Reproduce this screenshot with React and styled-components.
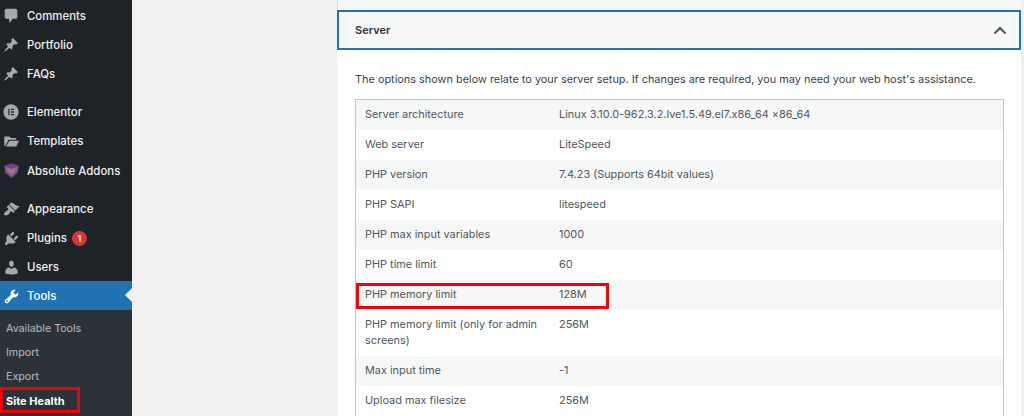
import React from "react";
import styled, { createGlobalStyle } from "styled-components";

const Global = createGlobalStyle`
  html, body { margin: 0; padding: 0; background: #f0f0f1; }
  body { font-family: Inter, "Liberation Sans", sans-serif; }
`;

const Page = styled.div`
  display: flex;
  width: 1024px;
  height: 416px;
  overflow: hidden;
  background: #f0f0f1;
`;

const Sidebar = styled.nav`
  width: 132px;
  flex: none;
  background: #1d2327;
  display: flex;
  flex-direction: column;
`;

const Group = styled.div`
  display: flex;
  flex-direction: column;
  margin-bottom: ${(p) => p.$gap || 0}px;
`;

const MenuItem = styled.div`
  position: relative;
  height: 29.1px;
  box-sizing: border-box;
  padding-top: 2px;
  display: flex;
  align-items: center;
  flex: none;
  color: ${(p) => (p.$active ? "#fff" : "#f0f0f1")};
  background: ${(p) => (p.$active ? "#2271b1" : "transparent")};
  font-size: 11.4px;
  font-weight: 500;
`;

const IconBox = styled.span`
  width: 27px;
  flex: none;
  display: flex;
  justify-content: center;
  padding-right: 5px;
  box-sizing: border-box;
`;

const Badge = styled.span`
  width: 15px;
  height: 15px;
  border-radius: 50%;
  background: #d63638;
  color: #fff;
  font-size: 9px;
  font-weight: 600;
  display: flex;
  align-items: center;
  justify-content: center;
  margin-left: 5px;
`;

const Arrow = styled.span`
  position: absolute;
  right: 0;
  top: 50%;
  margin-top: -7px;
  border: 7px solid transparent;
  border-right-color: #f0f0f1;
  border-left-width: 0;
`;

const Submenu = styled.div`
  flex: 1;
  background: #2c3338;
  padding-top: 7px;
  display: flex;
  flex-direction: column;
`;

const SubItem = styled.div`
  position: relative;
  height: 24px;
  display: flex;
  align-items: center;
  padding-left: 6px;
  font-size: ${(p) => (p.$current ? 11 : 10.7)}px;
  font-weight: ${(p) => (p.$current ? 700 : 400)};
  color: ${(p) => (p.$current ? "#fff" : "rgba(240,246,252,.7)")};
`;

const Mark = styled.span`
  position: absolute;
  box-sizing: border-box;
  border: 3px solid #f40009;
  pointer-events: none;
  left: ${(p) => p.$l}px;
  top: ${(p) => p.$t}px;
  width: ${(p) => p.$w}px;
  height: ${(p) => p.$h}px;
`;

const Content = styled.main`
  flex: 1;
  padding: 0 3px 0 205px;
  min-width: 0;
`;

const Panel = styled.section`
  background: #fff;
  height: 416px;
  box-sizing: border-box;
`;

const PrevItem = styled.div`
  height: 10px;
  background: #f6f7f7;
  border-left: 1px solid #dcdcde;
`;

const Heading = styled.div`
  height: 40px;
  box-sizing: border-box;
  border: 2px solid #2271b1;
  background: #f6f7f7;
  display: flex;
  align-items: center;
  justify-content: space-between;
  padding: 0 12px 0 16px;
  color: #2c3338;
  font-size: 11px;
  font-weight: 600;
`;

const Body = styled.div`
  padding: 0 17px 0 18px;
`;

const Intro = styled.p`
  margin: 0;
  padding-top: 21px;
  height: 49px;
  box-sizing: border-box;
  font-size: 10.9px;
  line-height: 16px;
  color: #3c434a;
  white-space: nowrap;
`;

const Table = styled.div`
  border: 1px solid #c3c4c7;
  border-bottom: none;
`;

const Row = styled.div`
  position: relative;
  display: grid;
  grid-template-columns: 194px 1fr;
  padding: 5.5px 9px 8.5px;
  background: ${(p) => (p.$odd ? "#f6f7f7" : "#fff")};
  font-size: 10.9px;
  line-height: 16px;
  color: #50575e;
  & > span:first-child { padding-right: 8px; }
`;

const ChevronIcon = () => (
  <svg width="14" height="9" viewBox="0 0 14 9" fill="none">
    <path d="M1.5 7.5 L7 2 L12.5 7.5" stroke="#50575e" strokeWidth="2" />
  </svg>
);

const Dash = ({ d, size = 18, fill = "#a7aaad" }) => (
  <svg width={size} height={size} viewBox="0 0 20 20" fill={fill}>
    <path fillRule="evenodd" d={d} />
  </svg>
);

const pinPath =
  "M10.44 3.02l1.82-1.82 6.36 6.35-1.83 1.82c-1.05-.68-2.48-.57-3.41.36l-.75.75c-.92.93-1.04 2.35-.35 3.41l-1.83 1.82-2.41-2.41-2.8 2.79c-.42.42-3.38 2.71-3.8 2.29s1.86-3.39 2.28-3.81l2.79-2.79L4.1 9.36l1.83-1.82c1.05.69 2.48.57 3.4-.36l.75-.75c.93-.92 1.05-2.35.36-3.41z";

const icons = {
  comments: <Dash d="M5 2h10c1.1 0 2 .9 2 2v7c0 1.1-.9 2-2 2h-3l-4 5v-5H5c-1.100 0-2-.9-2-2V4c0-1.100.9-2 2-2z" />,
  pin: <Dash size={16} d={pinPath} />,
  elementor: <Dash d="M10 1.500a8.500 8.500 0 1 1 0 17 8.500 8.500 0 0 1 0-17zM7 6.500v7h1.400v-7zm3 0v1.400h3.400V6.500zm0 2.800v1.400h3.400V9.300zm0 2.800v1.400h3.400v-1.400z" />,
  folder: <Dash size={17} d="M1.500 4h6l2 2h6v2H6.500L3 15H1.500zM7.500 9h11.500l-3.500 7H3.500z" />,
  cube: (
    <svg width="17" height="17" viewBox="0 0 20 20">
      <path d="M1.500 4.500L10 1.500l8.500 3-1 8L10 19l-7.500-6.500z" fill="#6f4283" />
      <path d="M2 5l8 3 8-3-2 7-6 5-6-5z" fill="#8a5a9e" />
      <path d="M5 7l5 2 5-2-1.500 4.500L10 14l-3.500-2.500z" fill="#b0727f" />
    </svg>
  ),
  brush: <Dash size={17} d="M14.480 11.060L7.410 3.990l1.500-1.500c.5-.56 2.300-.47 3.510.32 1.210.8 1.430 1.280 2.910 2.100 1.180.64 2.450 1.260 4.450.85zm-.71.71L6.700 4.700 4.930 6.470c-.39.39-.39 1.020 0 1.410l1.060 1.060c.39.39.39 1.030 0 1.420-.6.6-1.430 1.110-2.210 1.690-.35.26-.7.53-1.010.84C1.430 13.230.78 15.700 1.700 16.600c.91.9 3.500.4 4.830-.93.32-.31.58-.66.84-1.010.58-.79 1.090-1.600 1.690-2.200.39-.39 1.020-.39 1.410 0l1.060 1.060c.39.39 1.020.39 1.410 0z" />,
  plug: <Dash size={17} d="M13.110 4.360L9.870 7.600 8 5.730l3.240-3.240c.35-.34 1.050-.2 1.560.32.52.51.66 1.210.31 1.550zm-8 1.770l.91-1.120 9.010 9.010-1.190.84c-.71.71-2.630 1.160-3.820 1.160H6.140L4.900 17.260c-.59.59-1.540.59-2.120 0-.59-.58-.59-1.530 0-2.120l1.240-1.240v-3.880c0-1.130.4-3.190 1.090-3.890zm7.260 3.970l3.240-3.240c.34-.35 1.040-.21 1.550.31.52.51.66 1.210.31 1.550l-3.240 3.250z" />,
  user: <Dash size={17} d="M10 9.250c-2.270 0-2.730-3.440-2.730-3.440C7 4.020 7.820 2 9.970 2c2.160 0 2.980 2.020 2.710 3.810 0 0-.41 3.440-2.680 3.440zm0 2.570L12.720 10c2.390 0 4.520 2.330 4.520 4.530v2.490s-3.650 1.130-7.240 1.130c-3.650 0-7.240-1.130-7.240-1.130v-2.490c0-2.250 1.940-4.480 4.470-4.480z" />,
  wrench: <Dash size={17} fill="#fff" d="M16.680 9.770c-1.340 1.340-3.300 1.670-4.950.99l-5.410 6.520c-.99.99-2.590.99-3.580 0s-.99-2.590 0-3.570l6.520-5.420c-.68-1.650-.35-3.610.99-4.950 1.280-1.280 3.120-1.620 4.720-1.060l-2.890 2.890 2.820 2.820 2.860-2.870c.53 1.580.18 3.390-1.080 4.650zM3.810 16.210c.4.39 1.040.39 1.430 0 .4-.4.4-1.040 0-1.430-.39-.4-1.030-.4-1.430 0-.39.39-.39 1.030 0 1.430z" />,
};

const rows = [
  ["Server architecture", "Linux 3.10.0-962.3.2.lve1.5.49.el7.x86_64 x86_64"],
  ["Web server", "LiteSpeed"],
  ["PHP version", "7.4.23 (Supports 64bit values)"],
  ["PHP SAPI", "litespeed"],
  ["PHP max input variables", "1000"],
  ["PHP time limit", "60"],
  ["PHP memory limit", "128M", true],
  ["PHP memory limit (only for admin screens)", "256M"],
  ["Max input time", "-1"],
  ["Upload max filesize", "256M"],
];

const Item = ({ icon, label, children, active }) => (
  <MenuItem $active={active}>
    <IconBox>{icons[icon]}</IconBox>
    {label}
    {children}
  </MenuItem>
);

export default function App() {
  return (
    <Page>
      <Global />
      <Sidebar>
        <Group $gap={9.5}>
          <Item icon="comments" label="Comments" />
          <Item icon="pin" label="Portfolio" />
          <Item icon="pin" label="FAQs" />
        </Group>
        <Group $gap={9.5}>
          <Item icon="elementor" label="Elementor" />
          <Item icon="folder" label="Templates" />
          <Item icon="cube" label="Absolute Addons" />
        </Group>
        <Group>
          <Item icon="brush" label="Appearance" />
          <Item icon="plug" label="Plugins">
            <Badge>1</Badge>
          </Item>
          <Item icon="user" label="Users" />
          <Item icon="wrench" label="Tools" active>
            <Arrow />
          </Item>
        </Group>
        <Submenu>
          <SubItem>Available Tools</SubItem>
          <SubItem>Import</SubItem>
          <SubItem>Export</SubItem>
          <SubItem $current>
            Site Health
            <Mark $l={0} $t={-2} $w={80} $h={26} />
          </SubItem>
        </Submenu>
      </Sidebar>
      <Content>
        <Panel>
          <PrevItem />
          <Heading>
            Server
            <ChevronIcon />
          </Heading>
          <Body>
            <Intro>
              The options shown below relate to your server setup. If changes are required, you may need your web host's assistance.
            </Intro>
            <Table>
              {rows.map(([k, v, marked], i) => (
                <Row key={k} $odd={i % 2 === 0}>
                  <span>{k}</span>
                  <span>{v}</span>
                  {marked && <Mark $l={0} $t={3} $w={253} $h={26} />}
                </Row>
              ))}
            </Table>
          </Body>
        </Panel>
      </Content>
    </Page>
  );
}
